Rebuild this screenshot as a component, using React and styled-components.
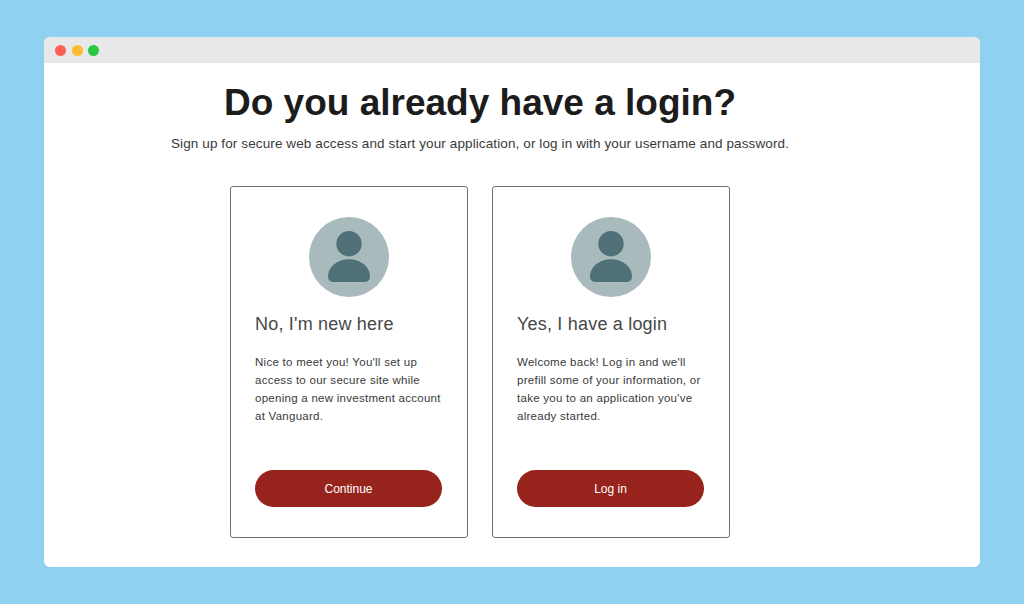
import styled, { createGlobalStyle } from 'styled-components'

const GlobalStyle = createGlobalStyle`
  html, body {
    margin: 0;
    padding: 0;
    background: #90d0f0;
  }
  body {
    font-family: "Liberation Sans", Arial, sans-serif;
  }
`

const Page = styled.div`
  width: 1024px;
  height: 604px;
  box-sizing: border-box;
  padding: 37px 44px;
  background: #90d0f0;
`

const Window = styled.div`
  width: 936px;
  height: 530px;
  background: #fff;
  border-radius: 6px;
  overflow: hidden;
`

const TitleBar = styled.div`
  height: 26px;
  background: #e8e8e8;
  display: flex;
  align-items: center;
  gap: 5.5px;
  padding-left: 11px;
`

const Dot = styled.span`
  width: 11px;
  height: 11px;
  border-radius: 50%;
  background: ${(p) => p.color};
`

const Main = styled.main`
  display: flex;
  flex-direction: column;
  align-items: center;
  padding-right: 64px;
`

const Heading = styled.h1`
  margin: 18px 0 0;
  font-size: 37px;
  line-height: 44px;
  font-weight: 700;
  color: #1c1c1c;
  white-space: nowrap;
`

const Subtitle = styled.p`
  margin: 9px 0 0;
  font-size: 13.5px;
  line-height: 20px;
  color: #3a3a3a;
  letter-spacing: 0.11px;
  white-space: nowrap;
`

const Cards = styled.div`
  display: flex;
  gap: 24px;
  margin-top: 32px;
`

const Card = styled.section`
  width: 238px;
  height: 352px;
  box-sizing: border-box;
  border: 1px solid #6f6f6f;
  border-radius: 3px;
  padding: 30px 25px 30px 24px;
  display: flex;
  flex-direction: column;
`

const Avatar = styled.svg`
  width: 80px;
  height: 80px;
  align-self: center;
  flex: none;
`

const CardTitle = styled.h2`
  margin: 15px 0 0;
  font-size: 18px;
  line-height: 24px;
  font-weight: 400;
  color: #484848;
  letter-spacing: 0.2px;
`

const CardText = styled.p`
  margin: 17px 0 0;
  font-size: 11.5px;
  line-height: 18px;
  color: #3a3a3a;
  letter-spacing: 0.27px;
  white-space: pre-line;
`

const Action = styled.button`
  margin-top: auto;
  width: 187px;
  height: 37px;
  flex: none;
  border: 0;
  border-radius: 19px;
  background: #96231c;
  color: #fff;
  font-family: inherit;
  font-size: 12px;
  font-weight: 400;
`

function PersonIcon() {
  return (
    <Avatar viewBox="0 0 80 80">
      <circle cx="40" cy="40" r="40" fill="#a8babc" />
      <circle cx="40" cy="26.700" r="12.700" fill="#507078" />
      <path
        d="M19 59.500c0-9.500 9.500-17.200 21-17.200s21 7.700 21 17.200c0 3.300-2.200 5.500-5.500 5.500h-31c-3.300 0-5.500-2.200-5.500-5.500z"
        fill="#507078"
      />
    </Avatar>
  )
}

const options = [
  {
    title: "No, I'm new here",
    text: "Nice to meet you! You'll set up\naccess to our secure site while\nopening a new investment account\nat Vanguard.",
    action: 'Continue',
  },
  {
    title: 'Yes, I have a login',
    text: "Welcome back! Log in and we'll\nprefill some of your information, or\ntake you to an application you've\nalready started.",
    action: 'Log in',
  },
]

export default function App() {
  return (
    <>
      <GlobalStyle />
      <Page>
        <Window>
          <TitleBar>
            <Dot color="#ff5f57" />
            <Dot color="#febc2e" />
            <Dot color="#28c840" />
          </TitleBar>
          <Main>
            <Heading>Do you already have a login?</Heading>
            <Subtitle>
              Sign up for secure web access and start your application, or log in with your username and password.
            </Subtitle>
            <Cards>
              {options.map((o) => (
                <Card key={o.action}>
                  <PersonIcon />
                  <CardTitle>{o.title}</CardTitle>
                  <CardText>{o.text}</CardText>
                  <Action>{o.action}</Action>
                </Card>
              ))}
            </Cards>
          </Main>
        </Window>
      </Page>
    </>
  )
}
